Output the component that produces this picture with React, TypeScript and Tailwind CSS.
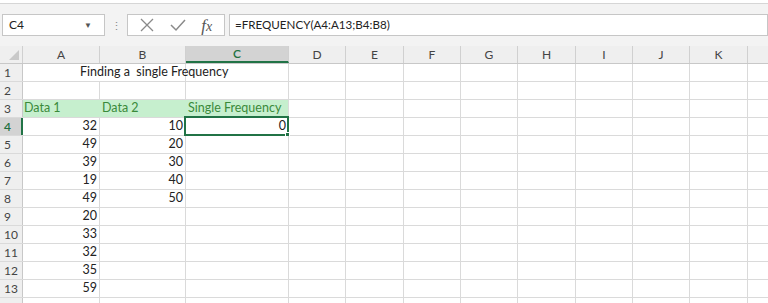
import React from 'react';

const cols = [
    { name: 'A', w: 'w-[77px]' },
    { name: 'B', w: 'w-[86px]' },
    { name: 'C', w: 'w-[103px]' },
    { name: 'D', w: 'w-[57px]' },
    { name: 'E', w: 'w-[58px]' },
    { name: 'F', w: 'w-[57px]' },
    { name: 'G', w: 'w-[57px]' },
    { name: 'H', w: 'w-[58px]' },
    { name: 'I', w: 'w-[57px]' },
    { name: 'J', w: 'w-[57px]' },
    { name: 'K', w: 'w-[58px]' },
    { name: '', w: 'w-[40px]' },
];

const colA = ['32', '49', '39', '19', '49', '20', '33', '32', '35', '59'];
const colB = ['10', '20', '30', '40', '50'];

function FormulaBar() {
    return (
        <div className="h-[43px] bg-[#f3f3f3] border-t border-[#d6d6d6] mt-[3px] flex items-center gap-[4px] pl-[2px]">
            <div className="w-[103px] h-[22px] bg-white border border-[#c6c6c6] flex items-center justify-between pl-[6px] pr-[12px] text-[12px] text-[#222]">
                <span>C4</span>
                <span className="text-[8px] text-[#555]">▼</span>
            </div>
            <div className="w-[14px] flex justify-center text-[#888] text-[11px]">⋮</div>
            <div className="w-[98px] h-[22px] bg-white border border-[#c6c6c6] flex items-center justify-around px-[4px]">
                <svg width="14" height="14" viewBox="0 0 14 14">
                    <path d="M1 1 L13 13 M13 1 L1 13" stroke="#8a8a8a" strokeWidth="1.3" fill="none" />
                </svg>
                <svg width="16" height="14" viewBox="0 0 16 14">
                    <path d="M1 7 L6 12 L15 2" stroke="#8a8a8a" strokeWidth="1.5" fill="none" />
                </svg>
                <span className="font-['Liberation_Serif',serif] italic text-[17px] text-[#555] leading-none">
                    f<span className="text-[14px]">x</span>
                </span>
            </div>
            <div className="flex-1 h-[22px] bg-white border border-[#c6c6c6] flex items-center pl-[5px] text-[11.6px] text-[#222]">
                =FREQUENCY(A4:A13;B4:B8)
            </div>
        </div>
    );
}

function HeaderRow() {
    return (
        <div className="flex h-[18px] bg-[#efefef] border-b border-[#c8c8c8]">
            <div className="w-[23px] shrink-0 border-r border-[#d0d0d0] relative">
                <div className="absolute right-[3px] bottom-[3px] w-0 h-0 border-l-[10px] border-l-transparent border-b-[10px] border-b-[#c9c9c9]" />
            </div>
            {cols.map((c) => (
                <div
                    key={c.name}
                    className={`${c.w} shrink-0 flex items-center justify-center border-r border-[#d0d0d0] ${
                        c.name === 'C'
                            ? 'bg-[#d3d3d3] text-[#21703f] font-semibold border-b-2 border-b-[#217346]'
                            : 'text-[#444]'
                    }`}
                >
                    {c.name}
                </div>
            ))}
        </div>
    );
}

function Row({ n }: { n: number }) {
    const active = n === 4;
    const a = n >= 4 ? colA[n - 4] : undefined;
    const b = n >= 4 && n <= 8 ? colB[n - 4] : undefined;
    return (
        <div className="flex h-[18px] border-b border-[#dadada] text-[12.5px]">
            <div
                className={`w-[23px] shrink-0 flex items-center pl-[4px] border-r text-[12px] ${
                    active
                        ? 'bg-[#d3d3d3] text-[#21703f] font-semibold border-r-2 border-r-[#217346]'
                        : 'bg-[#efefef] text-[#444] border-[#c8c8c8]'
                }`}
            >
                {n}
            </div>
            {n === 1 ? (
                <>
                    <div className="w-[163px] shrink-0 flex items-center pl-[57px] border-r border-[#dadada] text-[#222] whitespace-pre">
                        Finding a  single Frequency
                    </div>
                    {cols.slice(2).map((c) => (
                        <div key={c.name} className={`${c.w} shrink-0 border-r border-[#dadada]`} />
                    ))}
                </>
            ) : n === 3 ? (
                <>
                    <div className="w-[77px] shrink-0 flex items-center pl-[1px] bg-[#c6efce] text-[#3a8a3a]">Data 1</div>
                    <div className="w-[86px] shrink-0 flex items-center pl-[2px] bg-[#c6efce] text-[#3a8a3a]">Data 2</div>
                    <div className="w-[103px] shrink-0 flex items-center pl-[2px] bg-[#c6efce] text-[#3a8a3a] border-r border-[#dadada]">
                        Single Frequency
                    </div>
                    {cols.slice(3).map((c) => (
                        <div key={c.name} className={`${c.w} shrink-0 border-r border-[#dadada]`} />
                    ))}
                </>
            ) : (
                <>
                    <div className="w-[77px] shrink-0 flex items-center justify-end pr-[2px] border-r border-[#dadada] text-[#222]">
                        {a}
                    </div>
                    <div className="w-[86px] shrink-0 flex items-center justify-end pr-[2px] border-r border-[#dadada] text-[#222]">
                        {b}
                    </div>
                    <div className="w-[103px] shrink-0 border-r border-[#dadada] relative">
                        {active && (
                            <div className="absolute -left-[2px] -top-[2px] -right-[1px] -bottom-[1px] border-2 border-[#217346] flex items-center justify-end pr-[1px] text-[#222] bg-white">
                                0
                                <div className="absolute -right-[3px] -bottom-[3px] w-[5px] h-[5px] bg-[#217346] border border-white" />
                            </div>
                        )}
                    </div>
                    {cols.slice(3).map((c) => (
                        <div key={c.name} className={`${c.w} shrink-0 border-r border-[#dadada]`} />
                    ))}
                </>
            )}
        </div>
    );
}

export default function App() {
    return (
        <div className="w-[768px] h-[303px] overflow-hidden bg-white font-['Lato',sans-serif] text-[12px] leading-none">
            <FormulaBar />
            <HeaderRow />
            {Array.from({ length: 14 }, (_, i) => (
                <Row key={i} n={i + 1} />
            ))}
        </div>
    );
}
